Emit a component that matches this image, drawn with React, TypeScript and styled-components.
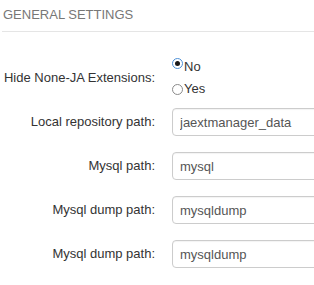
import React from 'react';
import styled, {createGlobalStyle} from 'styled-components';

const GlobalStyle = createGlobalStyle`
  html, body {
    margin: 0;
    padding: 0;
    background: #ffffff;
    overflow: hidden;
  }
  body {
    font-family: 'Liberation Sans', Arial, sans-serif;
    font-size: 13px;
    color: #333333;
  }
`;

const Panel = styled.div`
  width: 314px;
  height: 285px;
  padding: 0 0 0 2px;
  box-sizing: border-box;
  overflow: hidden;
`;

const Header = styled.h3`
  margin: 0;
  padding: 6px 0 7px 1px;
  font-size: 13px;
  font-weight: normal;
  line-height: 18px;
  color: #777777;
  border-bottom: 1px solid #e5e5e5;
`;

const Form = styled.div`
  display: flex;
  flex-direction: column;
  padding-top: 28px;
`;

const Row = styled.div<{$spacing: number}>`
  display: grid;
  grid-template-columns: 153px 1fr;
  column-gap: 17px;
  align-items: center;
  margin-bottom: ${p => p.$spacing}px;
`;

const Label = styled.label`
  text-align: right;
  line-height: 18px;
  color: #333333;
  white-space: nowrap;
`;

const RadioGroup = styled.div`
  display: flex;
  flex-direction: column;
  gap: 8px;
`;

const RadioOption = styled.label`
  display: flex;
  align-items: flex-start;
  line-height: 14px;
  color: #333333;
`;

const RadioMark = styled.span<{$checked?: boolean}>`
  width: 11px;
  height: 11px;
  box-sizing: border-box;
  border-radius: 50%;
  margin: ${p => (p.$checked ? '-2px' : '2px')} 1px 0 0;
  border: 1px solid ${p => (p.$checked ? '#4d90d6' : '#8a8a8a')};
  display: flex;
  align-items: center;
  justify-content: center;
  &::after {
    content: '';
    display: ${p => (p.$checked ? 'block' : 'none')};
    width: 5px;
    height: 5px;
    border-radius: 50%;
    background: #1a1a1a;
  }
`;

const Input = styled.input`
  width: 220px;
  height: 28px;
  box-sizing: border-box;
  padding: 0 7px;
  border: 1px solid #cccccc;
  border-radius: 4px;
  font-family: 'Liberation Sans', Arial, sans-serif;
  font-size: 13px;
  color: #555555;
  background: #ffffff;
  box-shadow: inset 0 1px 1px rgba(0, 0, 0, 0.05);
  outline: none;
`;

const paths = [
  {label: 'Local repository path:', value: 'jaextmanager_data'},
  {label: 'Mysql path:', value: 'mysql'},
  {label: 'Mysql dump path:', value: 'mysqldump'},
  {label: 'Mysql dump path:', value: 'mysqldump'},
];

export default function App() {
  return (
    <>
      <GlobalStyle />
      <Panel>
        <Header>GENERAL SETTINGS</Header>
        <Form>
          <Row $spacing={12}>
            <Label>Hide None-JA Extensions:</Label>
            <RadioGroup>
              <RadioOption>
                <RadioMark $checked />
                No
              </RadioOption>
              <RadioOption>
                <RadioMark />
                Yes
              </RadioOption>
            </RadioGroup>
          </Row>
          {paths.map((p, i) => (
            <Row key={i} $spacing={16}>
              <Label>{p.label}</Label>
              <Input defaultValue={p.value} readOnly />
            </Row>
          ))}
        </Form>
      </Panel>
    </>
  );
}
